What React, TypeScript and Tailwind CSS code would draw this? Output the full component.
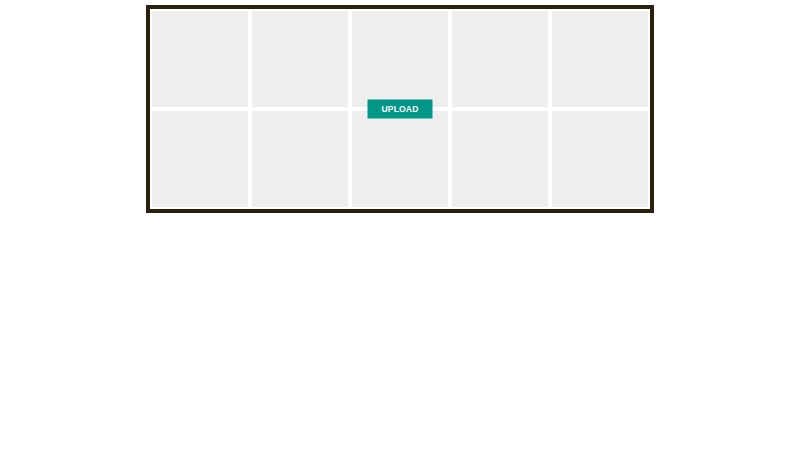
import React from "react";

export default function App() {
  const cells = Array.from({ length: 10 });
  return (
    <div className="w-[800px] h-[450px] bg-white flex justify-center" style={{ fontFamily: '"Liberation Sans", Arial, sans-serif' }}>
      <div className="mt-[5px] h-[208px] w-[508px] border-4 border-[#2b200b] relative">
        <div className="grid grid-cols-5">
          {cells.map((_, i) => (
            <div key={i} className="w-[96px] h-[96px] m-[2px] bg-[#eeeeee]" />
          ))}
        </div>
        <button className="absolute left-1/2 top-1/2 -translate-x-1/2 -translate-y-1/2 w-[65px] h-[19px] bg-[#009688] text-white text-[8.5px] font-bold tracking-[0.2px] flex items-center justify-center">
          UPLOAD
        </button>
      </div>
    </div>
  );
}
